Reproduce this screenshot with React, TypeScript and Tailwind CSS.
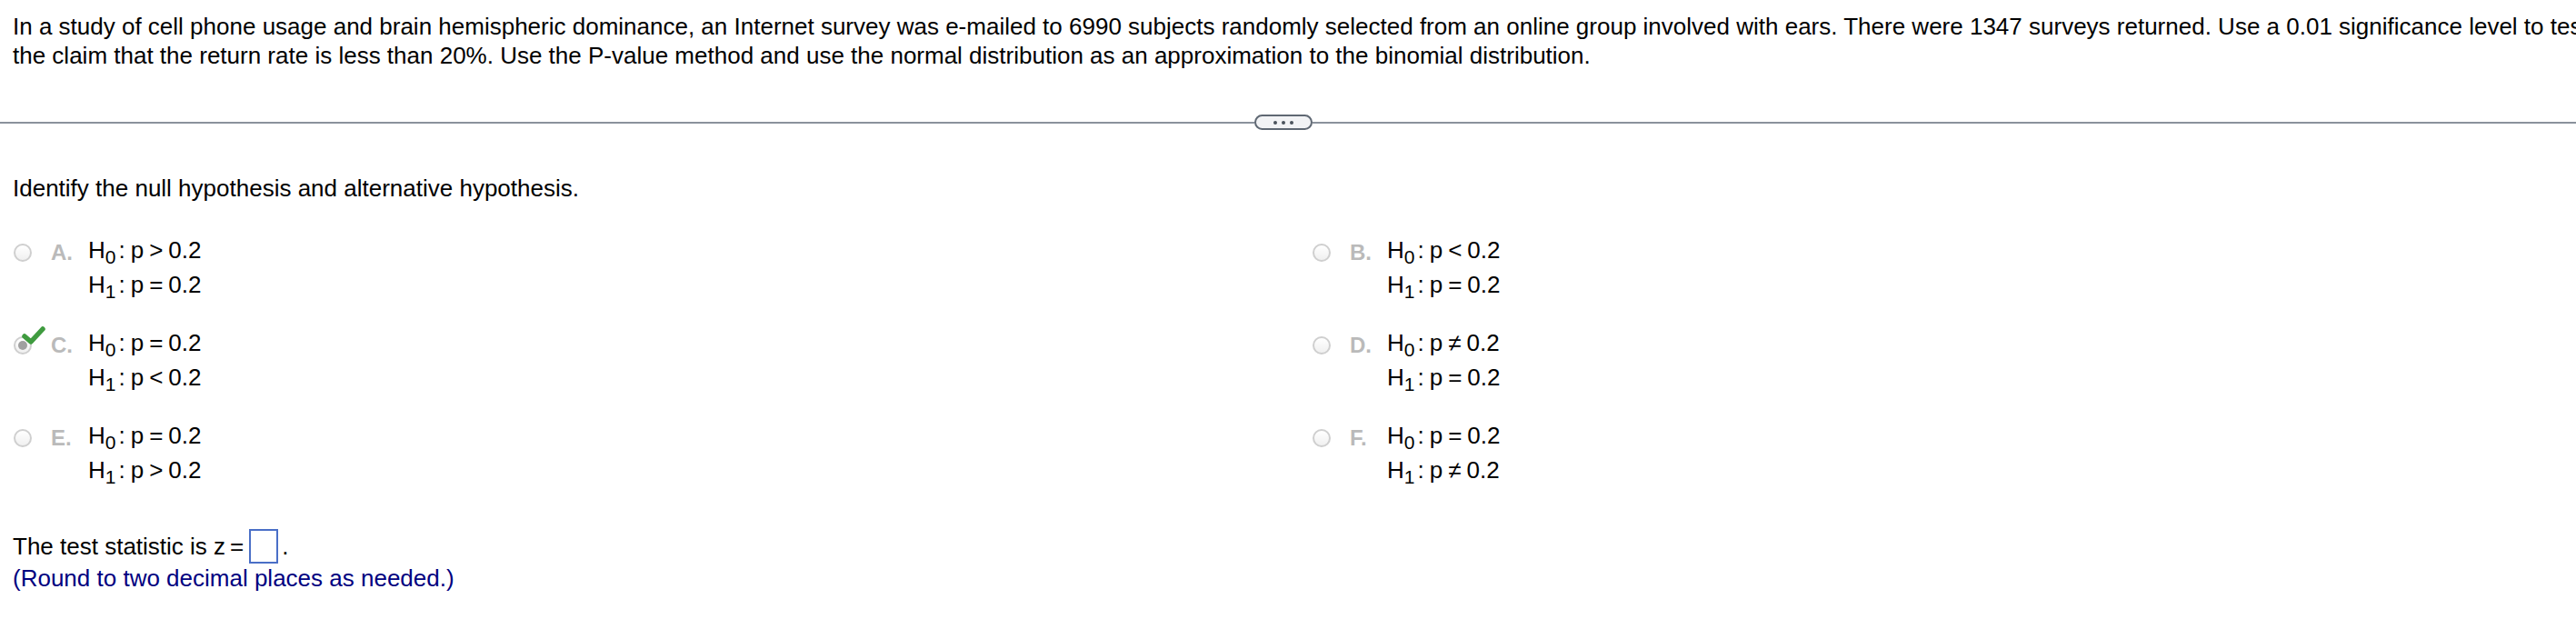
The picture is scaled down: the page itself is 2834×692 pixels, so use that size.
import type { ReactNode } from "react"

type Option = {
  letter: string
  h0: ReactNode
  h1: ReactNode
  selected?: boolean
}

function Hyp({ n, op }: { n: string; op: string }) {
  return (
    <div className="flex items-baseline h-[38px] whitespace-nowrap">
      <span>H</span>
      <span className="text-[21px] relative top-[6px]">{n}</span>
      <span className="ml-[3px]">:</span>
      <span className="ml-[6px]">p</span>
      <span className="ml-[6px]">{op}</span>
      <span className="ml-[6px]">0.2</span>
    </div>
  )
}

function Radio({ selected }: { selected?: boolean }) {
  return (
    <div className="relative w-[20px] h-[20px] flex-none">
      <div className="w-[20px] h-[20px] rounded-full border-2 border-[#cfcfcf] bg-gradient-to-b from-white to-[#f0f0f0] flex items-center justify-center">
        {selected && <div className="w-[10px] h-[10px] rounded-full bg-[#a0a0a0]" />}
      </div>
      {selected && (
        <svg className="absolute left-[8px] top-[-12px]" width="28" height="23" viewBox="0 0 28 23">
          <path d="M4 12 L11 18 L24 4" fill="none" stroke="#3f9b3f" strokeWidth="5.5" strokeLinecap="round" strokeLinejoin="round" />
        </svg>
      )}
    </div>
  )
}

function OptionRow({ opt }: { opt: Option }) {
  return (
    <div className="flex items-start">
      <div className="flex items-center h-[38px] pl-[15px] w-[56px]">
        <Radio selected={opt.selected} />
      </div>
      <div className="h-[38px] leading-[38px] w-[41px] font-bold text-[#bababa] text-[24px]">{opt.letter}.</div>
      <div>
        {opt.h0}
        {opt.h1}
      </div>
    </div>
  )
}

const options: Option[] = [
  { letter: "A", h0: <Hyp n="0" op=">" />, h1: <Hyp n="1" op="=" /> },
  { letter: "B", h0: <Hyp n="0" op="<" />, h1: <Hyp n="1" op="=" /> },
  { letter: "C", h0: <Hyp n="0" op="=" />, h1: <Hyp n="1" op="<" />, selected: true },
  { letter: "D", h0: <Hyp n="0" op="≠" />, h1: <Hyp n="1" op="=" /> },
  { letter: "E", h0: <Hyp n="0" op="=" />, h1: <Hyp n="1" op=">" /> },
  { letter: "F", h0: <Hyp n="0" op="=" />, h1: <Hyp n="1" op="≠" /> },
]

export default function App() {
  return (
    <div className="w-[2834px] h-[692px] overflow-hidden bg-white text-black font-['Liberation_Sans',Arial,sans-serif] text-[26px] leading-[32px]">
      <p className="pt-[13px] pl-[14px] whitespace-nowrap">
        In a study of cell phone usage and brain hemispheric dominance, an Internet survey was e-mailed to 6990 subjects randomly selected from an online group involved with ears. There were 1347 surveys returned. Use a 0.01 significance level to test
        <br />
        the claim that the return rate is less than 20%. Use the P-value method and use the normal distribution as an approximation to the binomial distribution.
      </p>

      <div className="flex items-center mt-[49px] h-[17px]">
        <div className="w-[1380px] h-[2px] bg-[#8a929c] flex-none" />
        <div className="w-[64px] h-[17px] flex-none rounded-full border-2 border-[#5f6873] bg-[#f2f3f5] flex items-center justify-center gap-[5px]">
          <span className="w-[4px] h-[4px] rounded-full bg-[#4b535c]" />
          <span className="w-[4px] h-[4px] rounded-full bg-[#4b535c]" />
          <span className="w-[4px] h-[4px] rounded-full bg-[#4b535c]" />
        </div>
        <div className="flex-1 h-[2px] bg-[#8a929c]" />
      </div>

      <p className="mt-[48px] pl-[14px]">Identify the null hypothesis and alternative hypothesis.</p>

      <div className="grid grid-cols-[1429px_1fr] gap-y-[26px] mt-[36px]">
        {options.map((o) => (
          <OptionRow key={o.letter} opt={o} />
        ))}
      </div>

      <div className="mt-[43px] pl-[14px]">
        <div className="flex items-center h-[38px]">
          <span>The test statistic is z</span>
          <span className="ml-[5px]">=</span>
          <span className="ml-[6px] w-[32px] h-[38px] border-2 border-[#4a6fc7] inline-block" />
          <span className="ml-[4px]">.</span>
        </div>
        <p className="text-[#000080]">(Round to two decimal places as needed.)</p>
      </div>
    </div>
  )
}
